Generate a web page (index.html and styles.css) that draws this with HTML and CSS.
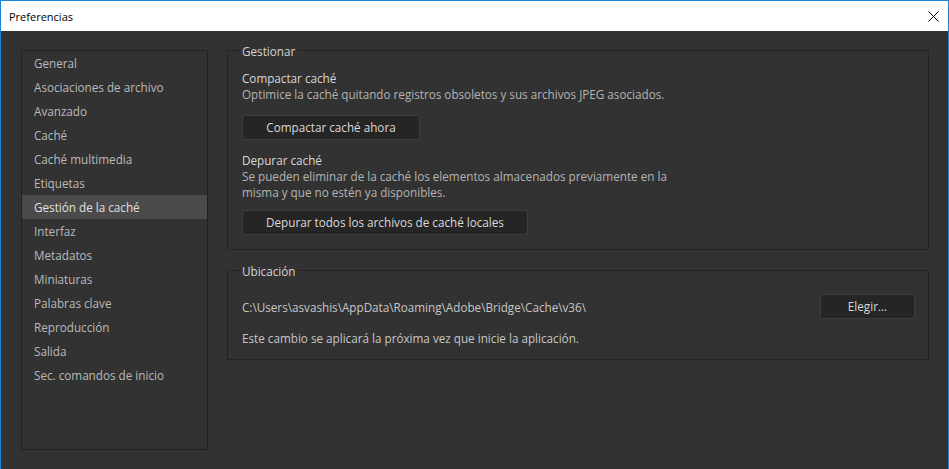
FILE: index.html
```html
<!DOCTYPE html>
<html lang="es">
<head>
<meta charset="utf-8">
<title>Preferencias</title>
<link rel="stylesheet" href="styles.css">
</head>
<body>
<div class="window">
  <header class="titlebar">
    <span class="title">Preferencias</span>
    <span class="close" aria-label="Cerrar">
      <svg width="11" height="11" viewBox="0 0 11 11"><path d="M0.5 0.5 L10.5 10.5 M10.5 0.5 L0.5 10.5" stroke="#000" stroke-width="1" fill="none"/></svg>
    </span>
  </header>
  <div class="body">
    <nav class="sidebar">
      <ul class="nav-list">
        <li class="nav-item">General</li>
        <li class="nav-item">Asociaciones de archivo</li>
        <li class="nav-item">Avanzado</li>
        <li class="nav-item">Caché</li>
        <li class="nav-item">Caché multimedia</li>
        <li class="nav-item">Etiquetas</li>
        <li class="nav-item selected">Gestión de la caché</li>
        <li class="nav-item">Interfaz</li>
        <li class="nav-item">Metadatos</li>
        <li class="nav-item">Miniaturas</li>
        <li class="nav-item">Palabras clave</li>
        <li class="nav-item">Reproducción</li>
        <li class="nav-item">Salida</li>
        <li class="nav-item">Sec. comandos de inicio</li>
      </ul>
    </nav>
    <main class="content">
      <fieldset class="group group-manage">
        <legend class="group-label">Gestionar</legend>
        <div class="sec-title first">Compactar caché</div>
        <div class="sec-desc">Optimice la caché quitando registros obsoletos y sus archivos JPEG asociados.</div>
        <button class="btn btn-compact">Compactar caché ahora</button>
        <div class="sec-title">Depurar caché</div>
        <div class="sec-desc">Se pueden eliminar de la caché los elementos almacenados previamente en la<br>misma y que no estén ya disponibles.</div>
        <button class="btn btn-purge">Depurar todos los archivos de caché locales</button>
      </fieldset>
      <fieldset class="group group-location">
        <legend class="group-label">Ubicación</legend>
        <div class="path-row">
          <span class="path">C:\Users\asvashis\AppData\Roaming\Adobe\Bridge\Cache\v36\</span>
          <button class="btn btn-choose">Elegir...</button>
        </div>
        <div class="note">Este cambio se aplicará la próxima vez que inicie la aplicación.</div>
      </fieldset>
    </main>
  </div>
</div>
</body>
</html>
```

FILE: styles.css
```css
* { box-sizing: border-box; }
html, body { margin: 0; padding: 0; background: #323232; }
body {
  font-family: "Open Sans", "Noto Sans", "Liberation Sans", sans-serif;
  font-size: 11.7px;
}
.window {
  width: 949px;
  height: 469px;
  border: 1px solid #1883d7;
  border-bottom: none;
  display: flex;
  flex-direction: column;
  overflow: hidden;
  background: #323232;
}
.titlebar {
  height: 30px;
  flex: none;
  background: #ffffff;
  display: flex;
  align-items: center;
  padding-left: 8px;
}
.title {
  color: #000;
  font-size: 11px;
  line-height: 16px;
  margin-top: 1px;
}
.close {
  margin-left: auto;
  margin-right: 9px;
  display: flex;
  width: 11px;
  height: 11px;
}
.body {
  flex: 1;
  display: flex;
  align-items: flex-start;
  gap: 19px;
  padding: 19px 19px 0 20px;
  background: #323232;
}
.sidebar {
  flex: none;
  width: 187px;
  height: 400px;
  border: 1px solid #222222;
}
.nav-list {
  list-style: none;
  margin: 0;
  padding: 0;
}
.nav-item {
  height: 24px;
  line-height: 24px;
  padding-left: 12px;
  color: #bababa;
  white-space: nowrap;
}
.nav-item.selected {
  background: #4b4b4b;
  color: #e0e0e0;
}
.content {
  flex: 1;
  min-width: 0;
  margin-top: -9px;
  display: flex;
  flex-direction: column;
}
.group {
  margin: 0;
  min-width: 0;
  border: 1px solid #232323;
  padding: 0 13px 14px 14px;
}
.group-location {
  margin-top: 11px;
  padding-bottom: 13px;
}
.group-label {
  margin-left: -2px;
  padding: 2px 2px 0 2px;
  line-height: 16px;
  color: #d2d2d2;
}
.sec-title {
  margin-top: 12px;
  line-height: 16px;
  color: #d8d8d8;
}
.sec-title.first { margin-top: 11px; }
.sec-desc {
  line-height: 16px;
  color: #b4b4b4;
}
.btn {
  display: block;
  height: 25px;
  margin-top: 13px;
  padding: 0;
  background: #252525;
  border: 1px solid #3e3e3e;
  border-radius: 2px;
  color: #dadada;
  font-family: inherit;
  font-size: inherit;
  line-height: 23px;
  text-align: center;
}
.btn-compact { width: 178px; }
.btn-purge { width: 286px; margin-top: 10px; }
.path-row {
  margin-top: 15px;
  display: flex;
  align-items: center;
  height: 25px;
}
.path {
  color: #c6c6c6;
  line-height: 16px;
}
.btn-choose {
  width: 95px;
  margin: 0 0 0 auto;
}
.note {
  margin-top: 11px;
  line-height: 16px;
  color: #c6c6c6;
}
```
